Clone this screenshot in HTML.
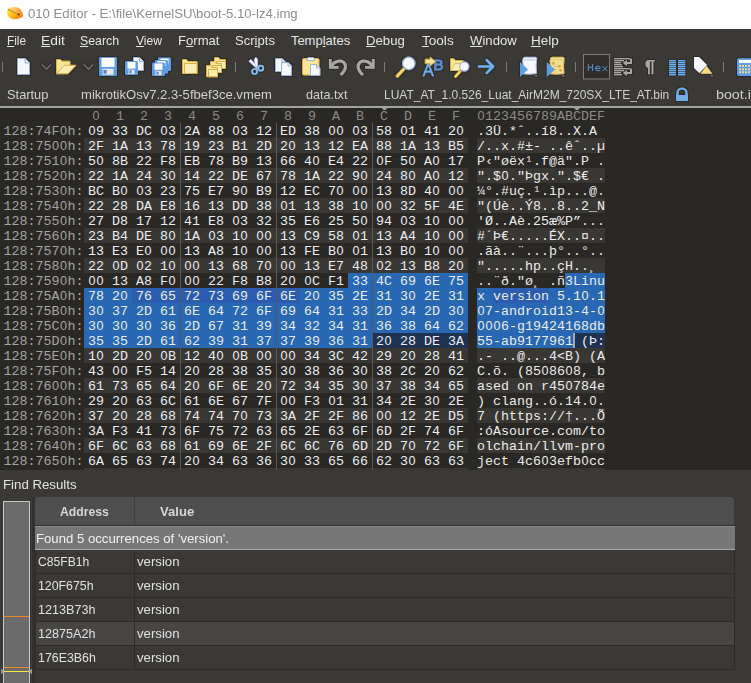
<!DOCTYPE html><html><head><meta charset="utf-8"><title>010 Editor</title><style>html,body{margin:0;padding:0}body{width:751px;height:683px;overflow:hidden;position:relative;background:#3b3935}.z{display:inline-block;width:8px;text-align:center;font-family:'Liberation Sans',sans-serif;font-size:12.6px}</style></head><body>
<div style="position:absolute;left:0px;top:0px;width:751px;height:29px;background:#ffffff;"></div>
<div style="position:absolute;left:28.00px;top:7.00px;font-family:'Liberation Sans', sans-serif;font-size:13px;font-weight:400;line-height:13px;color:#8e8e8e;white-space:pre;transform:scaleX(1.0113);transform-origin:0 0;">010 Editor - E:\file\KernelSU\boot-5.10-lz4.img</div>
<div style="position:absolute;left:6.69px;top:34.00px;font-family:'Liberation Sans', sans-serif;font-size:13px;font-weight:400;line-height:13px;color:#e4e4e4;white-space:pre;transform:scaleX(0.9100);transform-origin:0 0;"><span style="text-decoration:underline;text-decoration-thickness:1px;text-underline-offset:1px">F</span>ile</div>
<div style="position:absolute;left:41.14px;top:34.00px;font-family:'Liberation Sans', sans-serif;font-size:13px;font-weight:400;line-height:13px;color:#e4e4e4;white-space:pre;transform:scaleX(1.0619);transform-origin:0 0;"><span style="text-decoration:underline;text-decoration-thickness:1px;text-underline-offset:1px">E</span>dit</div>
<div style="position:absolute;left:79.95px;top:34.00px;font-family:'Liberation Sans', sans-serif;font-size:13px;font-weight:400;line-height:13px;color:#e4e4e4;white-space:pre;transform:scaleX(0.9500);transform-origin:0 0;"><span style="text-decoration:underline;text-decoration-thickness:1px;text-underline-offset:1px">S</span>earch</div>
<div style="position:absolute;left:135.80px;top:34.00px;font-family:'Liberation Sans', sans-serif;font-size:13px;font-weight:400;line-height:13px;color:#e4e4e4;white-space:pre;transform:scaleX(0.9321);transform-origin:0 0;"><span style="text-decoration:underline;text-decoration-thickness:1px;text-underline-offset:1px">V</span>iew</div>
<div style="position:absolute;left:177.99px;top:34.00px;font-family:'Liberation Sans', sans-serif;font-size:13px;font-weight:400;line-height:13px;color:#e4e4e4;white-space:pre;transform:scaleX(1.0075);transform-origin:0 0;">F<span style="text-decoration:underline;text-decoration-thickness:1px;text-underline-offset:1px">o</span>rmat</div>
<div style="position:absolute;left:234.69px;top:34.00px;font-family:'Liberation Sans', sans-serif;font-size:13px;font-weight:400;line-height:13px;color:#e4e4e4;white-space:pre;transform:scaleX(1.0053);transform-origin:0 0;">Scr<span style="text-decoration:underline;text-decoration-thickness:1px;text-underline-offset:1px">i</span>pts</div>
<div style="position:absolute;left:290.90px;top:34.00px;font-family:'Liberation Sans', sans-serif;font-size:13px;font-weight:400;line-height:13px;color:#e4e4e4;white-space:pre;">Temp<span style="text-decoration:underline;text-decoration-thickness:1px;text-underline-offset:1px">l</span>ates</div>
<div style="position:absolute;left:365.69px;top:34.00px;font-family:'Liberation Sans', sans-serif;font-size:13px;font-weight:400;line-height:13px;color:#e4e4e4;white-space:pre;transform:scaleX(1.0135);transform-origin:0 0;"><span style="text-decoration:underline;text-decoration-thickness:1px;text-underline-offset:1px">D</span>ebug</div>
<div style="position:absolute;left:421.50px;top:34.00px;font-family:'Liberation Sans', sans-serif;font-size:13px;font-weight:400;line-height:13px;color:#e4e4e4;white-space:pre;transform:scaleX(1.0433);transform-origin:0 0;"><span style="text-decoration:underline;text-decoration-thickness:1px;text-underline-offset:1px">T</span>ools</div>
<div style="position:absolute;left:469.50px;top:34.00px;font-family:'Liberation Sans', sans-serif;font-size:13px;font-weight:400;line-height:13px;color:#e4e4e4;white-space:pre;transform:scaleX(1.0109);transform-origin:0 0;"><span style="text-decoration:underline;text-decoration-thickness:1px;text-underline-offset:1px">W</span>indow</div>
<div style="position:absolute;left:531.46px;top:34.00px;font-family:'Liberation Sans', sans-serif;font-size:13px;font-weight:400;line-height:13px;color:#e4e4e4;white-space:pre;transform:scaleX(1.0400);transform-origin:0 0;"><span style="text-decoration:underline;text-decoration-thickness:1px;text-underline-offset:1px">H</span>elp</div>
<div style="position:absolute;left:6.61px;top:88.00px;font-family:'Liberation Sans', sans-serif;font-size:13px;font-weight:400;line-height:13px;color:#d0d0d0;white-space:pre;transform:scaleX(0.9878);transform-origin:0 0;">Startup</div>
<div style="position:absolute;left:81.20px;top:88.00px;font-family:'Liberation Sans', sans-serif;font-size:13px;font-weight:400;line-height:13px;color:#d0d0d0;white-space:pre;transform:scaleX(1.0048);transform-origin:0 0;">mikrotikOsv7.2.3-5fbef3ce.vmem</div>
<div style="position:absolute;left:305.70px;top:88.00px;font-family:'Liberation Sans', sans-serif;font-size:13px;font-weight:400;line-height:13px;color:#d0d0d0;white-space:pre;transform:scaleX(0.9721);transform-origin:0 0;">data.txt</div>
<div style="position:absolute;left:383.78px;top:88.00px;font-family:'Liberation Sans', sans-serif;font-size:13px;font-weight:400;line-height:13px;color:#d0d0d0;white-space:pre;transform:scaleX(0.9231);transform-origin:0 0;">LUAT_AT_1.0.526_Luat_AirM2M_720SX_LTE_AT.bin</div>
<div style="position:absolute;left:715.50px;top:88.00px;font-family:'Liberation Sans', sans-serif;font-size:13px;font-weight:400;line-height:13px;color:#d0d0d0;white-space:pre;transform:scaleX(1.0967);transform-origin:0 0;">boot.i</div>
<div style="position:absolute;left:0px;top:106px;width:751px;height:2px;background:#a3a3a3;"></div>
<div style="position:absolute;left:0px;top:108px;width:751px;height:362px;background:#2a2824;"></div>
<div style="position:absolute;left:84px;top:110px;font-family:'Liberation Mono', monospace;font-size:13.3333px;line-height:13.3333px;color:#8a8a8a;white-space:pre;"> <span class="z">0</span>  1  2  3  4  5  6  7  8  9  A  B  C  D  E  F </div>
<div style="position:absolute;left:477px;top:110px;font-family:'Liberation Mono', monospace;font-size:13.3333px;line-height:13.3333px;color:#8a8a8a;white-space:pre;"><span class="z">0</span>123456789ABCDEF</div>
<div style="position:absolute;left:84px;top:138px;width:384px;height:15px;background:#393733;"></div>
<div style="position:absolute;left:477px;top:138px;width:128px;height:15px;background:#393733;"></div>
<div style="position:absolute;left:84px;top:168px;width:384px;height:15px;background:#393733;"></div>
<div style="position:absolute;left:477px;top:168px;width:128px;height:15px;background:#393733;"></div>
<div style="position:absolute;left:84px;top:198px;width:384px;height:15px;background:#393733;"></div>
<div style="position:absolute;left:477px;top:198px;width:128px;height:15px;background:#393733;"></div>
<div style="position:absolute;left:84px;top:228px;width:384px;height:15px;background:#393733;"></div>
<div style="position:absolute;left:477px;top:228px;width:128px;height:15px;background:#393733;"></div>
<div style="position:absolute;left:84px;top:258px;width:384px;height:15px;background:#393733;"></div>
<div style="position:absolute;left:477px;top:258px;width:128px;height:15px;background:#393733;"></div>
<div style="position:absolute;left:348px;top:273px;width:120px;height:15px;background:#2767b3;"></div>
<div style="position:absolute;left:565px;top:273px;width:40px;height:15px;background:#2767b3;"></div>
<div style="position:absolute;left:84px;top:288px;width:384px;height:15px;background:#393733;"></div>
<div style="position:absolute;left:477px;top:288px;width:128px;height:15px;background:#393733;"></div>
<div style="position:absolute;left:84px;top:288px;width:384px;height:15px;background:#2767b3;"></div>
<div style="position:absolute;left:477px;top:288px;width:128px;height:15px;background:#2767b3;"></div>
<div style="position:absolute;left:132px;top:288px;width:168px;height:15px;background:#2b5caf;"></div>
<div style="position:absolute;left:493px;top:288px;width:56px;height:15px;background:#2b5caf;"></div>
<div style="position:absolute;left:84px;top:303px;width:384px;height:15px;background:#2767b3;"></div>
<div style="position:absolute;left:477px;top:303px;width:128px;height:15px;background:#2767b3;"></div>
<div style="position:absolute;left:84px;top:318px;width:384px;height:15px;background:#393733;"></div>
<div style="position:absolute;left:477px;top:318px;width:128px;height:15px;background:#393733;"></div>
<div style="position:absolute;left:84px;top:318px;width:384px;height:15px;background:#2767b3;"></div>
<div style="position:absolute;left:477px;top:318px;width:128px;height:15px;background:#2767b3;"></div>
<div style="position:absolute;left:84px;top:333px;width:288px;height:15px;background:#2767b3;"></div>
<div style="position:absolute;left:477px;top:333px;width:96px;height:15px;background:#2767b3;"></div>
<div style="position:absolute;left:372px;top:333px;width:96px;height:15px;background:#1f3252;"></div>
<div style="position:absolute;left:573px;top:333px;width:32px;height:15px;background:#1f3252;"></div>
<div style="position:absolute;left:84px;top:348px;width:384px;height:15px;background:#393733;"></div>
<div style="position:absolute;left:477px;top:348px;width:128px;height:15px;background:#393733;"></div>
<div style="position:absolute;left:84px;top:378px;width:384px;height:15px;background:#393733;"></div>
<div style="position:absolute;left:477px;top:378px;width:128px;height:15px;background:#393733;"></div>
<div style="position:absolute;left:84px;top:408px;width:384px;height:15px;background:#393733;"></div>
<div style="position:absolute;left:477px;top:408px;width:128px;height:15px;background:#393733;"></div>
<div style="position:absolute;left:84px;top:438px;width:384px;height:15px;background:#393733;"></div>
<div style="position:absolute;left:477px;top:438px;width:128px;height:15px;background:#393733;"></div>
<div style="position:absolute;left:84px;top:468px;width:384px;height:2px;background:#393733;"></div>
<div style="position:absolute;left:477px;top:468px;width:128px;height:2px;background:#393733;"></div>
<div style="position:absolute;left:180px;top:123px;width:1px;height:347px;background:#5b5955;"></div>
<div style="position:absolute;left:276px;top:123px;width:1px;height:347px;background:#5b5955;"></div>
<div style="position:absolute;left:372px;top:123px;width:1px;height:347px;background:#5b5955;"></div>
<div style="position:absolute;left:573px;top:333px;width:2px;height:15px;background:#a8a8a8;"></div>
<div style="position:absolute;left:3.5px;top:124px;font-family:'Liberation Mono', monospace;font-size:13.3333px;line-height:15px;color:#a3a3a3;white-space:pre;">128:74F<span class="z">0</span>h:</div>
<div style="position:absolute;left:88px;top:124px;font-family:'Liberation Mono', monospace;font-size:13.3333px;line-height:15px;color:#ececec;white-space:pre;"><span class="z">0</span>9 33 DC <span class="z">0</span>3 2A 88 <span class="z">0</span>3 12 ED 38 <span class="z">0</span><span class="z">0</span> <span class="z">0</span>3 58 <span class="z">0</span>1 41 2<span class="z">0</span></div>
<div style="position:absolute;left:477px;top:124px;font-family:'Liberation Mono', monospace;font-size:13.3333px;line-height:15px;color:#ececec;white-space:pre;">.3Ü.*ˆ..í8..X.A </div>
<div style="position:absolute;left:3.5px;top:139px;font-family:'Liberation Mono', monospace;font-size:13.3333px;line-height:15px;color:#a3a3a3;white-space:pre;">128:75<span class="z">0</span><span class="z">0</span>h:</div>
<div style="position:absolute;left:88px;top:139px;font-family:'Liberation Mono', monospace;font-size:13.3333px;line-height:15px;color:#ececec;white-space:pre;">2F 1A 13 78 19 23 B1 2D 2<span class="z">0</span> 13 12 EA 88 1A 13 B5</div>
<div style="position:absolute;left:477px;top:139px;font-family:'Liberation Mono', monospace;font-size:13.3333px;line-height:15px;color:#ececec;white-space:pre;">/..x.#±- ..êˆ..µ</div>
<div style="position:absolute;left:3.5px;top:154px;font-family:'Liberation Mono', monospace;font-size:13.3333px;line-height:15px;color:#a3a3a3;white-space:pre;">128:751<span class="z">0</span>h:</div>
<div style="position:absolute;left:88px;top:154px;font-family:'Liberation Mono', monospace;font-size:13.3333px;line-height:15px;color:#ececec;white-space:pre;">5<span class="z">0</span> 8B 22 F8 EB 78 B9 13 66 4<span class="z">0</span> E4 22 <span class="z">0</span>F 5<span class="z">0</span> A<span class="z">0</span> 17</div>
<div style="position:absolute;left:477px;top:154px;font-family:'Liberation Mono', monospace;font-size:13.3333px;line-height:15px;color:#ececec;white-space:pre;">P‹&quot;øëx¹.f@ä&quot;.P .</div>
<div style="position:absolute;left:3.5px;top:169px;font-family:'Liberation Mono', monospace;font-size:13.3333px;line-height:15px;color:#a3a3a3;white-space:pre;">128:752<span class="z">0</span>h:</div>
<div style="position:absolute;left:88px;top:169px;font-family:'Liberation Mono', monospace;font-size:13.3333px;line-height:15px;color:#ececec;white-space:pre;">22 1A 24 3<span class="z">0</span> 14 22 DE 67 78 1A 22 9<span class="z">0</span> 24 8<span class="z">0</span> A<span class="z">0</span> 12</div>
<div style="position:absolute;left:477px;top:169px;font-family:'Liberation Mono', monospace;font-size:13.3333px;line-height:15px;color:#ececec;white-space:pre;">&quot;.$<span class="z">0</span>.&quot;Þgx.&quot;.$€ .</div>
<div style="position:absolute;left:3.5px;top:184px;font-family:'Liberation Mono', monospace;font-size:13.3333px;line-height:15px;color:#a3a3a3;white-space:pre;">128:753<span class="z">0</span>h:</div>
<div style="position:absolute;left:88px;top:184px;font-family:'Liberation Mono', monospace;font-size:13.3333px;line-height:15px;color:#ececec;white-space:pre;">BC B<span class="z">0</span> <span class="z">0</span>3 23 75 E7 9<span class="z">0</span> B9 12 EC 7<span class="z">0</span> <span class="z">0</span><span class="z">0</span> 13 8D 4<span class="z">0</span> <span class="z">0</span><span class="z">0</span></div>
<div style="position:absolute;left:477px;top:184px;font-family:'Liberation Mono', monospace;font-size:13.3333px;line-height:15px;color:#ececec;white-space:pre;">¼°.#uç.¹.ìp...@.</div>
<div style="position:absolute;left:3.5px;top:199px;font-family:'Liberation Mono', monospace;font-size:13.3333px;line-height:15px;color:#a3a3a3;white-space:pre;">128:754<span class="z">0</span>h:</div>
<div style="position:absolute;left:88px;top:199px;font-family:'Liberation Mono', monospace;font-size:13.3333px;line-height:15px;color:#ececec;white-space:pre;">22 28 DA E8 16 13 DD 38 <span class="z">0</span>1 13 38 1<span class="z">0</span> <span class="z">0</span><span class="z">0</span> 32 5F 4E</div>
<div style="position:absolute;left:477px;top:199px;font-family:'Liberation Mono', monospace;font-size:13.3333px;line-height:15px;color:#ececec;white-space:pre;">&quot;(Úè..Ý8..8..2_N</div>
<div style="position:absolute;left:3.5px;top:214px;font-family:'Liberation Mono', monospace;font-size:13.3333px;line-height:15px;color:#a3a3a3;white-space:pre;">128:755<span class="z">0</span>h:</div>
<div style="position:absolute;left:88px;top:214px;font-family:'Liberation Mono', monospace;font-size:13.3333px;line-height:15px;color:#ececec;white-space:pre;">27 D8 17 12 41 E8 <span class="z">0</span>3 32 35 E6 25 5<span class="z">0</span> 94 <span class="z">0</span>3 1<span class="z">0</span> <span class="z">0</span><span class="z">0</span></div>
<div style="position:absolute;left:477px;top:214px;font-family:'Liberation Mono', monospace;font-size:13.3333px;line-height:15px;color:#ececec;white-space:pre;">&#x27;Ø..Aè.25æ%P”...</div>
<div style="position:absolute;left:3.5px;top:229px;font-family:'Liberation Mono', monospace;font-size:13.3333px;line-height:15px;color:#a3a3a3;white-space:pre;">128:756<span class="z">0</span>h:</div>
<div style="position:absolute;left:88px;top:229px;font-family:'Liberation Mono', monospace;font-size:13.3333px;line-height:15px;color:#ececec;white-space:pre;">23 B4 DE 8<span class="z">0</span> 1A <span class="z">0</span>3 1<span class="z">0</span> <span class="z">0</span><span class="z">0</span> 13 C9 58 <span class="z">0</span>1 13 A4 1<span class="z">0</span> <span class="z">0</span><span class="z">0</span></div>
<div style="position:absolute;left:477px;top:229px;font-family:'Liberation Mono', monospace;font-size:13.3333px;line-height:15px;color:#ececec;white-space:pre;">#´Þ€.....ÉX..¤..</div>
<div style="position:absolute;left:3.5px;top:244px;font-family:'Liberation Mono', monospace;font-size:13.3333px;line-height:15px;color:#a3a3a3;white-space:pre;">128:757<span class="z">0</span>h:</div>
<div style="position:absolute;left:88px;top:244px;font-family:'Liberation Mono', monospace;font-size:13.3333px;line-height:15px;color:#ececec;white-space:pre;">13 E3 E<span class="z">0</span> <span class="z">0</span><span class="z">0</span> 13 A8 1<span class="z">0</span> <span class="z">0</span><span class="z">0</span> 13 FE B<span class="z">0</span> <span class="z">0</span>1 13 B<span class="z">0</span> 1<span class="z">0</span> <span class="z">0</span><span class="z">0</span></div>
<div style="position:absolute;left:477px;top:244px;font-family:'Liberation Mono', monospace;font-size:13.3333px;line-height:15px;color:#ececec;white-space:pre;">.ãà..¨...þ°..°..</div>
<div style="position:absolute;left:3.5px;top:259px;font-family:'Liberation Mono', monospace;font-size:13.3333px;line-height:15px;color:#a3a3a3;white-space:pre;">128:758<span class="z">0</span>h:</div>
<div style="position:absolute;left:88px;top:259px;font-family:'Liberation Mono', monospace;font-size:13.3333px;line-height:15px;color:#ececec;white-space:pre;">22 <span class="z">0</span>D <span class="z">0</span>2 1<span class="z">0</span> <span class="z">0</span><span class="z">0</span> 13 68 7<span class="z">0</span> <span class="z">0</span><span class="z">0</span> 13 E7 48 <span class="z">0</span>2 13 B8 2<span class="z">0</span></div>
<div style="position:absolute;left:477px;top:259px;font-family:'Liberation Mono', monospace;font-size:13.3333px;line-height:15px;color:#ececec;white-space:pre;">&quot;.....hp..çH..¸ </div>
<div style="position:absolute;left:3.5px;top:274px;font-family:'Liberation Mono', monospace;font-size:13.3333px;line-height:15px;color:#a3a3a3;white-space:pre;">128:759<span class="z">0</span>h:</div>
<div style="position:absolute;left:88px;top:274px;font-family:'Liberation Mono', monospace;font-size:13.3333px;line-height:15px;color:#ececec;white-space:pre;"><span class="z">0</span><span class="z">0</span> 13 A8 F<span class="z">0</span> <span class="z">0</span><span class="z">0</span> 22 F8 B8 2<span class="z">0</span> <span class="z">0</span>C F1 33 4C 69 6E 75</div>
<div style="position:absolute;left:477px;top:274px;font-family:'Liberation Mono', monospace;font-size:13.3333px;line-height:15px;color:#ececec;white-space:pre;">..¨ð.&quot;ø¸ .ñ3Linu</div>
<div style="position:absolute;left:3.5px;top:289px;font-family:'Liberation Mono', monospace;font-size:13.3333px;line-height:15px;color:#a3a3a3;white-space:pre;">128:75A<span class="z">0</span>h:</div>
<div style="position:absolute;left:88px;top:289px;font-family:'Liberation Mono', monospace;font-size:13.3333px;line-height:15px;color:#ececec;white-space:pre;">78 2<span class="z">0</span> 76 65 72 73 69 6F 6E 2<span class="z">0</span> 35 2E 31 3<span class="z">0</span> 2E 31</div>
<div style="position:absolute;left:477px;top:289px;font-family:'Liberation Mono', monospace;font-size:13.3333px;line-height:15px;color:#ececec;white-space:pre;">x version 5.1<span class="z">0</span>.1</div>
<div style="position:absolute;left:3.5px;top:304px;font-family:'Liberation Mono', monospace;font-size:13.3333px;line-height:15px;color:#a3a3a3;white-space:pre;">128:75B<span class="z">0</span>h:</div>
<div style="position:absolute;left:88px;top:304px;font-family:'Liberation Mono', monospace;font-size:13.3333px;line-height:15px;color:#ececec;white-space:pre;">3<span class="z">0</span> 37 2D 61 6E 64 72 6F 69 64 31 33 2D 34 2D 3<span class="z">0</span></div>
<div style="position:absolute;left:477px;top:304px;font-family:'Liberation Mono', monospace;font-size:13.3333px;line-height:15px;color:#ececec;white-space:pre;"><span class="z">0</span>7-android13-4-<span class="z">0</span></div>
<div style="position:absolute;left:3.5px;top:319px;font-family:'Liberation Mono', monospace;font-size:13.3333px;line-height:15px;color:#a3a3a3;white-space:pre;">128:75C<span class="z">0</span>h:</div>
<div style="position:absolute;left:88px;top:319px;font-family:'Liberation Mono', monospace;font-size:13.3333px;line-height:15px;color:#ececec;white-space:pre;">3<span class="z">0</span> 3<span class="z">0</span> 3<span class="z">0</span> 36 2D 67 31 39 34 32 34 31 36 38 64 62</div>
<div style="position:absolute;left:477px;top:319px;font-family:'Liberation Mono', monospace;font-size:13.3333px;line-height:15px;color:#ececec;white-space:pre;"><span class="z">0</span><span class="z">0</span><span class="z">0</span>6-g19424168db</div>
<div style="position:absolute;left:3.5px;top:334px;font-family:'Liberation Mono', monospace;font-size:13.3333px;line-height:15px;color:#a3a3a3;white-space:pre;">128:75D<span class="z">0</span>h:</div>
<div style="position:absolute;left:88px;top:334px;font-family:'Liberation Mono', monospace;font-size:13.3333px;line-height:15px;color:#ececec;white-space:pre;">35 35 2D 61 62 39 31 37 37 39 36 31 2<span class="z">0</span> 28 DE 3A</div>
<div style="position:absolute;left:477px;top:334px;font-family:'Liberation Mono', monospace;font-size:13.3333px;line-height:15px;color:#ececec;white-space:pre;">55-ab9177961 (Þ:</div>
<div style="position:absolute;left:3.5px;top:349px;font-family:'Liberation Mono', monospace;font-size:13.3333px;line-height:15px;color:#a3a3a3;white-space:pre;">128:75E<span class="z">0</span>h:</div>
<div style="position:absolute;left:88px;top:349px;font-family:'Liberation Mono', monospace;font-size:13.3333px;line-height:15px;color:#ececec;white-space:pre;">1<span class="z">0</span> 2D 2<span class="z">0</span> <span class="z">0</span>B 12 4<span class="z">0</span> <span class="z">0</span>B <span class="z">0</span><span class="z">0</span> <span class="z">0</span><span class="z">0</span> 34 3C 42 29 2<span class="z">0</span> 28 41</div>
<div style="position:absolute;left:477px;top:349px;font-family:'Liberation Mono', monospace;font-size:13.3333px;line-height:15px;color:#ececec;white-space:pre;">.- ..@...4&lt;B) (A</div>
<div style="position:absolute;left:3.5px;top:364px;font-family:'Liberation Mono', monospace;font-size:13.3333px;line-height:15px;color:#a3a3a3;white-space:pre;">128:75F<span class="z">0</span>h:</div>
<div style="position:absolute;left:88px;top:364px;font-family:'Liberation Mono', monospace;font-size:13.3333px;line-height:15px;color:#ececec;white-space:pre;">43 <span class="z">0</span><span class="z">0</span> F5 14 2<span class="z">0</span> 28 38 35 3<span class="z">0</span> 38 36 3<span class="z">0</span> 38 2C 2<span class="z">0</span> 62</div>
<div style="position:absolute;left:477px;top:364px;font-family:'Liberation Mono', monospace;font-size:13.3333px;line-height:15px;color:#ececec;white-space:pre;">C.õ. (85<span class="z">0</span>86<span class="z">0</span>8, b</div>
<div style="position:absolute;left:3.5px;top:379px;font-family:'Liberation Mono', monospace;font-size:13.3333px;line-height:15px;color:#a3a3a3;white-space:pre;">128:76<span class="z">0</span><span class="z">0</span>h:</div>
<div style="position:absolute;left:88px;top:379px;font-family:'Liberation Mono', monospace;font-size:13.3333px;line-height:15px;color:#ececec;white-space:pre;">61 73 65 64 2<span class="z">0</span> 6F 6E 2<span class="z">0</span> 72 34 35 3<span class="z">0</span> 37 38 34 65</div>
<div style="position:absolute;left:477px;top:379px;font-family:'Liberation Mono', monospace;font-size:13.3333px;line-height:15px;color:#ececec;white-space:pre;">ased on r45<span class="z">0</span>784e</div>
<div style="position:absolute;left:3.5px;top:394px;font-family:'Liberation Mono', monospace;font-size:13.3333px;line-height:15px;color:#a3a3a3;white-space:pre;">128:761<span class="z">0</span>h:</div>
<div style="position:absolute;left:88px;top:394px;font-family:'Liberation Mono', monospace;font-size:13.3333px;line-height:15px;color:#ececec;white-space:pre;">29 2<span class="z">0</span> 63 6C 61 6E 67 7F <span class="z">0</span><span class="z">0</span> F3 <span class="z">0</span>1 31 34 2E 3<span class="z">0</span> 2E</div>
<div style="position:absolute;left:477px;top:394px;font-family:'Liberation Mono', monospace;font-size:13.3333px;line-height:15px;color:#ececec;white-space:pre;">) clang..ó.14.<span class="z">0</span>.</div>
<div style="position:absolute;left:3.5px;top:409px;font-family:'Liberation Mono', monospace;font-size:13.3333px;line-height:15px;color:#a3a3a3;white-space:pre;">128:762<span class="z">0</span>h:</div>
<div style="position:absolute;left:88px;top:409px;font-family:'Liberation Mono', monospace;font-size:13.3333px;line-height:15px;color:#ececec;white-space:pre;">37 2<span class="z">0</span> 28 68 74 74 7<span class="z">0</span> 73 3A 2F 2F 86 <span class="z">0</span><span class="z">0</span> 12 2E D5</div>
<div style="position:absolute;left:477px;top:409px;font-family:'Liberation Mono', monospace;font-size:13.3333px;line-height:15px;color:#ececec;white-space:pre;">7 (https://†...Õ</div>
<div style="position:absolute;left:3.5px;top:424px;font-family:'Liberation Mono', monospace;font-size:13.3333px;line-height:15px;color:#a3a3a3;white-space:pre;">128:763<span class="z">0</span>h:</div>
<div style="position:absolute;left:88px;top:424px;font-family:'Liberation Mono', monospace;font-size:13.3333px;line-height:15px;color:#ececec;white-space:pre;">3A F3 41 73 6F 75 72 63 65 2E 63 6F 6D 2F 74 6F</div>
<div style="position:absolute;left:477px;top:424px;font-family:'Liberation Mono', monospace;font-size:13.3333px;line-height:15px;color:#ececec;white-space:pre;">:óAsource.com/to</div>
<div style="position:absolute;left:3.5px;top:439px;font-family:'Liberation Mono', monospace;font-size:13.3333px;line-height:15px;color:#a3a3a3;white-space:pre;">128:764<span class="z">0</span>h:</div>
<div style="position:absolute;left:88px;top:439px;font-family:'Liberation Mono', monospace;font-size:13.3333px;line-height:15px;color:#ececec;white-space:pre;">6F 6C 63 68 61 69 6E 2F 6C 6C 76 6D 2D 7<span class="z">0</span> 72 6F</div>
<div style="position:absolute;left:477px;top:439px;font-family:'Liberation Mono', monospace;font-size:13.3333px;line-height:15px;color:#ececec;white-space:pre;">olchain/llvm-pro</div>
<div style="position:absolute;left:3.5px;top:454px;font-family:'Liberation Mono', monospace;font-size:13.3333px;line-height:15px;color:#a3a3a3;white-space:pre;">128:765<span class="z">0</span>h:</div>
<div style="position:absolute;left:88px;top:454px;font-family:'Liberation Mono', monospace;font-size:13.3333px;line-height:15px;color:#ececec;white-space:pre;">6A 65 63 74 2<span class="z">0</span> 34 63 36 3<span class="z">0</span> 33 65 66 62 3<span class="z">0</span> 63 63</div>
<div style="position:absolute;left:477px;top:454px;font-family:'Liberation Mono', monospace;font-size:13.3333px;line-height:15px;color:#ececec;white-space:pre;">ject 4c6<span class="z">0</span>3efb<span class="z">0</span>cc</div>
<div style="position:absolute;left:2.68px;top:478.00px;font-family:'Liberation Sans', sans-serif;font-size:13px;font-weight:400;line-height:13px;color:#e2e2e2;white-space:pre;transform:scaleX(1.0183);transform-origin:0 0;">Find Results</div>
<div style="position:absolute;left:32px;top:497px;width:3px;height:186px;background:#33312d;"></div>
<div style="position:absolute;left:3px;top:501px;width:27px;height:182px;background:#c4c4c4;"></div>
<div style="position:absolute;left:4px;top:502px;width:25px;height:181px;background:#6b6b6b;"></div>
<div style="position:absolute;left:4px;top:616px;width:25px;height:1px;background:#f08a1e;"></div>
<div style="position:absolute;left:4px;top:667px;width:25px;height:1px;background:#f08a1e;"></div>
<div style="position:absolute;left:4px;top:671px;width:25px;height:1px;background:#f4e83a;"></div>
<svg style="position:absolute;left:0;top:660px" width="34" height="23" viewBox="0 660 34 23"><path d="M1,668.5 L4,671.5 L1,674.5 Z" fill="#9a9a9a"/><path d="M32,668.5 L29,671.5 L32,674.5 Z" fill="#9a9a9a"/></svg>
<div style="position:absolute;left:35px;top:497px;width:699px;height:28px;background:#4e4e4e;border-radius:4px 4px 0 0;"></div>
<div style="position:absolute;left:134px;top:497px;width:1px;height:28px;background:#3f3f3f;"></div>
<div style="position:absolute;left:35px;top:525px;width:700px;height:1px;background:#2f2e2b;"></div>
<div style="position:absolute;left:60.20px;top:505.00px;font-family:'Liberation Sans', sans-serif;font-size:13px;font-weight:700;line-height:13px;color:#d6d6d6;white-space:pre;transform:scaleX(0.9404);transform-origin:0 0;">Address</div>
<div style="position:absolute;left:160.30px;top:505.00px;font-family:'Liberation Sans', sans-serif;font-size:13px;font-weight:700;line-height:13px;color:#d6d6d6;white-space:pre;transform:scaleX(1.0088);transform-origin:0 0;">Value</div>
<div style="position:absolute;left:35px;top:526px;width:700px;height:24px;background:#777777;"></div>
<div style="position:absolute;left:35px;top:526px;width:700px;height:1px;background:#8c8c8c;"></div>
<div style="position:absolute;left:35px;top:549px;width:700px;height:1px;background:#a9a9a9;"></div>
<div style="position:absolute;left:36.29px;top:532.00px;font-family:'Liberation Sans', sans-serif;font-size:13px;font-weight:400;line-height:13px;color:#f0f0f0;white-space:pre;transform:scaleX(1.0122);transform-origin:0 0;">Found 5 occurrences of &#x27;version&#x27;.</div>
<div style="position:absolute;left:35px;top:573px;width:699px;height:1px;background:#2e2c29;"></div>
<div style="position:absolute;left:37.57px;top:555.00px;font-family:'Liberation Sans', sans-serif;font-size:13px;font-weight:400;line-height:13px;color:#e0e0e0;white-space:pre;transform:scaleX(0.9321);transform-origin:0 0;">C85FB1h</div>
<div style="position:absolute;left:137.30px;top:555.00px;font-family:'Liberation Sans', sans-serif;font-size:13px;font-weight:400;line-height:13px;color:#e0e0e0;white-space:pre;transform:scaleX(1.0146);transform-origin:0 0;">version</div>
<div style="position:absolute;left:35px;top:597px;width:699px;height:1px;background:#2e2c29;"></div>
<div style="position:absolute;left:37.55px;top:579.00px;font-family:'Liberation Sans', sans-serif;font-size:13px;font-weight:400;line-height:13px;color:#e0e0e0;white-space:pre;transform:scaleX(0.9491);transform-origin:0 0;">120F675h</div>
<div style="position:absolute;left:137.30px;top:579.00px;font-family:'Liberation Sans', sans-serif;font-size:13px;font-weight:400;line-height:13px;color:#e0e0e0;white-space:pre;transform:scaleX(1.0146);transform-origin:0 0;">version</div>
<div style="position:absolute;left:35px;top:621px;width:699px;height:1px;background:#2e2c29;"></div>
<div style="position:absolute;left:37.53px;top:603.00px;font-family:'Liberation Sans', sans-serif;font-size:13px;font-weight:400;line-height:13px;color:#e0e0e0;white-space:pre;transform:scaleX(0.9690);transform-origin:0 0;">1213B73h</div>
<div style="position:absolute;left:137.30px;top:603.00px;font-family:'Liberation Sans', sans-serif;font-size:13px;font-weight:400;line-height:13px;color:#e0e0e0;white-space:pre;transform:scaleX(1.0146);transform-origin:0 0;">version</div>
<div style="position:absolute;left:35px;top:622px;width:699px;height:23px;background:#474644;"></div>
<div style="position:absolute;left:35px;top:645px;width:699px;height:1px;background:#2e2c29;"></div>
<div style="position:absolute;left:37.53px;top:627.00px;font-family:'Liberation Sans', sans-serif;font-size:13px;font-weight:400;line-height:13px;color:#e0e0e0;white-space:pre;transform:scaleX(0.9690);transform-origin:0 0;">12875A2h</div>
<div style="position:absolute;left:137.30px;top:627.00px;font-family:'Liberation Sans', sans-serif;font-size:13px;font-weight:400;line-height:13px;color:#e0e0e0;white-space:pre;transform:scaleX(1.0146);transform-origin:0 0;">version</div>
<div style="position:absolute;left:35px;top:669px;width:699px;height:1px;background:#2e2c29;"></div>
<div style="position:absolute;left:37.55px;top:651.00px;font-family:'Liberation Sans', sans-serif;font-size:13px;font-weight:400;line-height:13px;color:#e0e0e0;white-space:pre;transform:scaleX(0.9525);transform-origin:0 0;">176E3B6h</div>
<div style="position:absolute;left:137.30px;top:651.00px;font-family:'Liberation Sans', sans-serif;font-size:13px;font-weight:400;line-height:13px;color:#e0e0e0;white-space:pre;transform:scaleX(1.0146);transform-origin:0 0;">version</div>
<div style="position:absolute;left:35px;top:550px;width:1px;height:120px;background:#2e2c29;"></div>
<div style="position:absolute;left:134px;top:550px;width:1px;height:120px;background:#2e2c29;"></div>
<div style="position:absolute;left:734px;top:550px;width:1px;height:120px;background:#2e2c29;"></div>
<svg style="position:absolute;left:0;top:0" width="751" height="110" viewBox="0 0 751 110"><defs><linearGradient id="lg1" x1="0" y1="0.2" x2="1" y2="0.8"><stop offset="0" stop-color="#ffe030"/><stop offset="0.5" stop-color="#ffb818"/><stop offset="1" stop-color="#ff7010"/></linearGradient><linearGradient id="lg2" x1="0" y1="0" x2="1" y2="0.3"><stop offset="0" stop-color="#fff0c8"/><stop offset="1" stop-color="#ff9a40"/></linearGradient></defs><path d="M7,10 Q8,8.2 11,7.6 Q15,6.8 18.5,7.8 Q21,9.5 22.2,12.5 Q23,14.8 23.2,16.6 Q20,18.6 15.5,19.2 Q10.5,19.4 8.5,16.8 Q7,14 7,10 Z" fill="url(#lg1)"/><path d="M8,8.8 Q13,6.6 18.5,7.8 Q20.5,9 21.5,11.5 L18.5,14 Q13,11 8,8.8 Z" fill="url(#lg2)" opacity="0.75"/><path d="M8,9.2 L18.5,14.4" stroke="#a08a20" stroke-width="1.2"/><path d="M8.5,9.4 L18,14.1" stroke="#e8e040" stroke-width="0.6" opacity="0.8"/><circle cx="18.6" cy="14.4" r="0.9" fill="#3a2a10"/><rect x="2" y="62" width="1" height="10" fill="#7b7a76"/><rect x="235" y="62" width="1" height="10" fill="#7b7a76"/><rect x="384" y="62" width="1" height="10" fill="#7b7a76"/><rect x="506" y="62" width="1" height="10" fill="#7b7a76"/><rect x="575" y="62" width="1" height="10" fill="#7b7a76"/><rect x="723" y="62" width="1" height="10" fill="#7b7a76"/><filter id="halo" x="-30%" y="-30%" width="160%" height="160%"><feMorphology in="SourceAlpha" operator="dilate" radius="0.9" result="d"/><feFlood flood-color="#24221f" flood-opacity="0.55"/><feComposite in2="d" operator="in" result="s"/><feMerge><feMergeNode in="s"/><feMergeNode in="SourceGraphic"/></feMerge></filter><g filter="url(#halo)"><path d="M17.5,58.5 H25.0 L29.5,63.0 V74.5 H17.5 Z" fill="#f5f8fe" stroke="#9db1d8" stroke-width="1"/><path d="M25.0,58.5 V63.0 H29.5" fill="#dfe7f6" stroke="#9db1d8" stroke-width="1"/><polyline points="42.0,64.5 46.5,69.3 51.0,64.5" fill="none" stroke="#6f6e6a" stroke-width="1.3"/><polyline points="84.0,64.5 88.5,69.3 93.0,64.5" fill="none" stroke="#6f6e6a" stroke-width="1.3"/><path d="M56.5,73.5 V59.5 H60.5 L62,61.2 H70 V66" fill="#f8e59a" stroke="#d6b24a"/><path d="M56.5,73.8 L64.2,65.3 H76 L68,73.8 Z" fill="#fbeeb4" stroke="#d6b24a"/><rect x="99" y="57" width="18" height="19" rx="1.5" fill="#5e9ee2"/><rect x="101.5" y="58" width="13" height="8.9" fill="#ffffff"/><rect x="102.5" y="68.8" width="11" height="5.9" fill="#ece8df"/><rect x="103.5" y="69.9" width="3.1" height="3.8" fill="#4a86d6"/><path d="M133.5,57.5 H139.5 L143.5,61.5 V70.5 H133.5 Z" fill="#f5f8fe" stroke="#9db1d8" stroke-width="1"/><path d="M139.5,57.5 V61.5 H143.5" fill="#dfe7f6" stroke="#9db1d8" stroke-width="1"/><rect x="125" y="61" width="13" height="14" rx="1.5" fill="#5e9ee2"/><rect x="127.5" y="62" width="8" height="6.6" fill="#ffffff"/><rect x="128.5" y="69.7" width="6" height="4.3" fill="#ece8df"/><rect x="129.5" y="70.5" width="2.2" height="2.8" fill="#4a86d6"/><rect x="158" y="57.5" width="13" height="13.5" rx="1.2" fill="#5e9ee2"/><rect x="160.5" y="58.5" width="8" height="5" fill="#fff"/><rect x="155" y="60" width="13" height="13.5" rx="1.2" fill="#5e9ee2"/><rect x="157.5" y="61" width="8" height="5" fill="#fff"/><rect x="152" y="62.5" width="13" height="13.5" rx="1.5" fill="#5e9ee2"/><rect x="154.5" y="63.5" width="8" height="6.3" fill="#ffffff"/><rect x="155.5" y="70.9" width="6" height="4.2" fill="#ece8df"/><rect x="156.5" y="71.7" width="2.2" height="2.7" fill="#4a86d6"/><path d="M182.5,73.5 V59.5 H186.5 L188,61.5 H197.0 V73.5 Z" fill="#f8e59a" stroke="#d6b24a"/><rect x="184.5" y="63.5" width="12.5" height="10" fill="#fbeeb4" stroke="#d6b24a"/><path d="M214.5,68.5 V57.5 H218.5 L220,59.5 H225.5 V68.5 Z" fill="#f8e59a" stroke="#d6b24a"/><rect x="216.5" y="61.5" width="9" height="7" fill="#fbeeb4" stroke="#d6b24a"/><path d="M210.5,72.5 V61.5 H214.5 L216,63.5 H221.5 V72.5 Z" fill="#f8e59a" stroke="#d6b24a"/><rect x="212.5" y="65.5" width="9" height="7" fill="#fbeeb4" stroke="#d6b24a"/><path d="M206.5,76.7 V65.5 H210.5 L212,67.5 H217.5 V76.7 Z" fill="#f8e59a" stroke="#d6b24a"/><rect x="208.5" y="69.5" width="9" height="7.199999999999999" fill="#fbeeb4" stroke="#d6b24a"/><path d="M248.8,61.2 L250.9,59.4 L257.2,65.9 L255.6,67.6 Z" fill="#f6f8fe" stroke="#a9bde0" stroke-width="0.7"/><path d="M254.3,59.6 L255.8,57 L257.6,59.6 L257.5,67 L255.5,67 Z" fill="#f6f8fe" stroke="#a9bde0" stroke-width="0.7"/><path d="M255.5,66.5 L257.5,66.5 L258,69 L255.8,69.5 Z" fill="#a9bde0"/><circle cx="254.6" cy="71.5" r="2.5" fill="none" stroke="#86bff2" stroke-width="1.7"/><circle cx="260.8" cy="68.2" r="2.5" fill="none" stroke="#86bff2" stroke-width="1.7"/><path d="M275.5,58.5 H282.0 L285.5,62.0 V71.5 H275.5 Z" fill="#f5f8fe" stroke="#9db1d8" stroke-width="1"/><path d="M282.0,58.5 V62.0 H285.5" fill="#dfe7f6" stroke="#9db1d8" stroke-width="1"/><path d="M281.5,62.5 H288.0 L291.5,66.0 V75.5 H281.5 Z" fill="#f5f8fe" stroke="#9db1d8" stroke-width="1"/><path d="M288.0,62.5 V66.0 H291.5" fill="#dfe7f6" stroke="#9db1d8" stroke-width="1"/><rect x="302.5" y="58.5" width="16.5" height="16.5" rx="1.5" fill="#f8e59a" stroke="#d6b24a"/><path d="M306.8,60.5 L308,57.5 H313.5 L314.7,60.5 Z" fill="#f5f8fe" stroke="#9db1d8" stroke-width="0.9"/><path d="M310.5,64.5 H316.5 L320.0,68.0 V75.5 H310.5 Z" fill="#f5f8fe" stroke="#9db1d8" stroke-width="1"/><path d="M316.5,64.5 V68.0 H320.0" fill="#dfe7f6" stroke="#9db1d8" stroke-width="1"/><path d="M330.3,59 V67.3 H338.5" fill="none" stroke="#a9a7a3" stroke-width="2.7"/><path d="M331.5,66.5 C333.5,62 337,61 340,61 C343,61 345.5,63.5 345.5,66.5 C345.5,69.5 343.5,72.3 340.6,75" fill="none" stroke="#a9a7a3" stroke-width="3"/><g transform="matrix(-1,0,0,1,703.6,0)"><path d="M330.3,59 V67.3 H338.5" fill="none" stroke="#a9a7a3" stroke-width="2.7"/><path d="M331.5,66.5 C333.5,62 337,61 340,61 C343,61 345.5,63.5 345.5,66.5 C345.5,69.5 343.5,72.3 340.6,75" fill="none" stroke="#a9a7a3" stroke-width="3"/></g><path d="M397.3,76 L403.5,69.3" stroke="#d6b24a" stroke-width="3.4" stroke-linecap="round"/><path d="M397.3,76 L403.5,69.3" stroke="#f6dc80" stroke-width="1.8" stroke-linecap="round"/><circle cx="408.8" cy="63.4" r="6.2" fill="#f6f8fe" stroke="#9fb2d6" stroke-width="1.2"/><text x="433.2" y="70.4" font-family="Liberation Sans" font-weight="400" font-size="15.5" fill="#5a8cc8" stroke="#5a8cc8" stroke-width="0.9">B</text><text x="422.8" y="75.8" font-family="Liberation Sans" font-weight="400" font-size="16.5" fill="#6fb0ee" stroke="#6fb0ee" stroke-width="0.4">A</text><path d="M425.2,59.2 H430.2 V57 L435.3,61.5 L430.2,66 V63.6 H425.2 Z" fill="#f6e39a" stroke="#d6b24a" stroke-width="0.8"/><path d="M450.5,70.5 V58.8 H454 L455.5,60.5 H463 V70.5 Z" fill="#f8e59a" stroke="#d6b24a"/><path d="M450.5,70.5 L455,63.5 H465 V70.5 Z" fill="#fbeeb4" stroke="#d6b24a" stroke-width="0.8"/><path d="M455.5,76.5 L460,71.5" stroke="#d6b24a" stroke-width="3" stroke-linecap="round"/><path d="M455.5,76.5 L460,71.5" stroke="#f6dc80" stroke-width="1.5" stroke-linecap="round"/><circle cx="464.3" cy="66.5" r="4.6" fill="#f6f8fe" stroke="#9fb2d6" stroke-width="1.1"/><path d="M479,66.5 H492 M486.8,60.2 L493,66.5 L486.8,72.8" fill="none" stroke="#6fb0ee" stroke-width="2.6" stroke-linecap="round" stroke-linejoin="round"/><path d="M523.1,59.5 Q522.6,57.5 524.6,57.3 L535.6,57.3 Q537.4,57.5 536.6,59.5 Q535.6,66 536.6,73.5 Q529.6,74.8 523.1,73.8 Q523.8000000000001,66 522.6,60 Z" fill="#f5f7fc" stroke="#a8b9dc" stroke-width="1"/><path d="M524.1,59.8 H535.6" stroke="#a8b9dc" stroke-width="0.8" fill="none"/><path d="M520,61.9 L528,69.5 L520,77 Z" fill="#5e9ee2"/><path d="M534.3,75.3 H538 L536.15,76.9 Z" fill="#777672"/><path d="M550.5,59.5 Q550,57.5 552,57.3 L563,57.3 Q564.8,57.5 564,59.5 Q563,66 564,73.5 Q557,74.8 550.5,73.8 Q551.2,66 550,60 Z" fill="#f4dc94" stroke="#dcbd62" stroke-width="1"/><path d="M551.5,59.8 H563" stroke="#dcbd62" stroke-width="0.8" fill="none"/><circle cx="553.4" cy="63.4" r="1.3" fill="#cfa343"/><circle cx="559.5" cy="66.2" r="1.3" fill="#cfa343"/><circle cx="560.6" cy="70.2" r="1.3" fill="#cfa343"/><circle cx="555" cy="66.5" r="0.5" fill="#cfa343"/><circle cx="557" cy="66.5" r="0.5" fill="#cfa343"/><circle cx="554" cy="69.5" r="0.5" fill="#cfa343"/><circle cx="556" cy="69.5" r="0.5" fill="#cfa343"/><circle cx="555.5" cy="72" r="0.5" fill="#cfa343"/><path d="M546.8,61.9 L555,69.5 L546.8,77 Z" fill="#5e9ee2"/><path d="M561.5,75.3 H565.2 L563.35,76.9 Z" fill="#777672"/></g><rect x="583.5" y="54.5" width="26" height="24.5" fill="#2f2e2b" stroke="#7d7c78" stroke-width="1"/><path d="M588.3,63.8 V71 M592.6,63.8 V71 M588.3,67.3 H592.6 M595.6,68.4 H600.2 V67.8 Q600.2,66.3 598.6,66.3 H597.2 Q595.6,66.3 595.6,68 V69.3 Q595.6,70.6 597.2,70.6 H600.2 M602.6,66.2 L607.2,71 M607.2,66.2 L602.6,71" fill="none" stroke="#5893d2" stroke-width="1"/><g filter="url(#halo)"><rect x="614" y="58" width="16" height="1.2" fill="#a9a7a3"/><rect x="614" y="60" width="10" height="1.2" fill="#a9a7a3"/><rect x="614" y="62" width="7" height="1.2" fill="#a9a7a3"/><rect x="614" y="64" width="8" height="1.2" fill="#a9a7a3"/><rect x="614" y="66" width="9" height="1.2" fill="#a9a7a3"/><rect x="614" y="68" width="16" height="1.2" fill="#a9a7a3"/><rect x="614" y="70" width="10" height="1.2" fill="#a9a7a3"/><rect x="614" y="72" width="7" height="1.2" fill="#a9a7a3"/><rect x="614" y="74" width="8" height="1.2" fill="#a9a7a3"/><path d="M630,58.8 H632 V64 H626.5 V62 H630 Z" fill="#a9a7a3"/><path d="M623,63 L627,60 V66 Z" fill="#a9a7a3"/><path d="M630,68.8 H632 V74 H626.5 V72 H630 Z" fill="#a9a7a3"/><path d="M623,73 L627,70 V76 Z" fill="#a9a7a3"/><path d="M649.5,60 A4,4 0 0 0 649.5,68 Z" fill="#a9a7a3"/><rect x="647.8" y="60" width="7.2" height="1.3" fill="#a9a7a3"/><rect x="648" y="60" width="1.7" height="14.2" fill="#a9a7a3"/><rect x="651.6" y="60" width="1.7" height="14.2" fill="#a9a7a3"/><rect x="669" y="60" width="7" height="1.3" fill="#6fb0ee"/><rect x="678" y="60" width="7.2" height="1.3" fill="#6fb0ee"/><rect x="669" y="62" width="7" height="1.3" fill="#6fb0ee"/><rect x="678" y="62" width="7.2" height="1.3" fill="#6fb0ee"/><rect x="669" y="64" width="7" height="1.3" fill="#6fb0ee"/><rect x="678" y="64" width="7.2" height="1.3" fill="#6fb0ee"/><rect x="669" y="66" width="7" height="1.3" fill="#6fb0ee"/><rect x="678" y="66" width="7.2" height="1.3" fill="#6fb0ee"/><rect x="669" y="68" width="7" height="1.3" fill="#6fb0ee"/><rect x="678" y="68" width="7.2" height="1.3" fill="#6fb0ee"/><rect x="669" y="70" width="7" height="1.3" fill="#6fb0ee"/><rect x="678" y="70" width="7.2" height="1.3" fill="#6fb0ee"/><rect x="669" y="72" width="7" height="1.3" fill="#6fb0ee"/><rect x="678" y="72" width="7.2" height="1.3" fill="#6fb0ee"/><rect x="669" y="74" width="7" height="1.3" fill="#6fb0ee"/><rect x="678" y="74" width="7.2" height="1.3" fill="#6fb0ee"/><path d="M694,57 H699 L707,65 L699.5,73 L694,68 Z" fill="#f5f8fe"/><path d="M706.5,66 L712.3,73.8 H700.6 Z" fill="#f4da85"/><path d="M709.8,75 H714 L711.9,76.7 Z" fill="#777672"/><rect x="737" y="58.3" width="16" height="17.6" rx="1.8" fill="#5e9ee2"/><rect x="739" y="60" width="12" height="3" fill="#ffffff"/><rect x="739.2" y="65" width="1.9" height="1.9" fill="#f6e08a"/><rect x="742.1" y="65" width="1.9" height="1.9" fill="#f6e08a"/><rect x="745" y="65" width="1.9" height="1.9" fill="#f6e08a"/><rect x="748" y="65" width="1.9" height="1.9" fill="#f6e08a"/><rect x="739.2" y="68.4" width="1.9" height="1.9" fill="#f6e08a"/><rect x="742.1" y="68.4" width="1.9" height="1.9" fill="#f6e08a"/><rect x="745" y="68.4" width="1.9" height="1.9" fill="#f6e08a"/><rect x="748" y="68.4" width="1.9" height="1.9" fill="#f6e08a"/><rect x="739.2" y="71.3" width="1.9" height="1.9" fill="#f6e08a"/><rect x="742.1" y="71.3" width="1.9" height="1.9" fill="#f6e08a"/><rect x="745" y="71.3" width="1.9" height="1.9" fill="#f6e08a"/><rect x="748" y="71.3" width="1.9" height="1.9" fill="#f6e08a"/><path d="M677.5,95 V93 A4.5,4.5 0 0 1 686.5,93 V95" fill="none" stroke="#72aeea" stroke-width="2.2"/><rect x="676" y="95" width="12" height="6" fill="#72aeea"/></g><path d="M381.6,108 H387.4 L384.5,110.8 Z" fill="#a3a3a3"/><path d="M574.1,108 H579.9 L577,110.8 Z" fill="#a3a3a3"/></svg>
</body></html>
